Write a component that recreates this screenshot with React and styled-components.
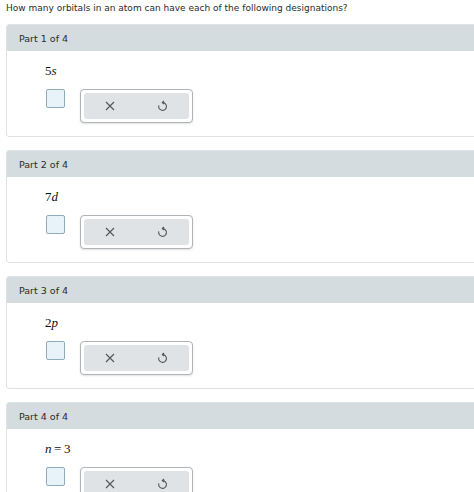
import React from "react";
import styled, { createGlobalStyle } from "styled-components";

const GlobalStyle = createGlobalStyle`
  html, body {
    margin: 0;
    padding: 0;
    overflow: hidden;
    background: #fff;
  }
  body {
    font-family: "DejaVu Sans", Verdana, sans-serif;
    color: #333;
  }
`;

const Page = styled.div`
  display: flex;
  flex-direction: column;
  padding: 2px 0 0 6px;
  width: 540px;
`;

const Question = styled.p`
  margin: 0 0 9px 0;
  font-size: 9px;
  line-height: 13px;
  color: #2b2b2b;
`;

const Cards = styled.div`
  display: flex;
  flex-direction: column;
  gap: 13px;
`;

const Card = styled.section`
  border: 1px solid #dfe2e4;
  border-radius: 3px;
  overflow: hidden;
`;

const Header = styled.div`
  height: 26px;
  display: flex;
  align-items: center;
  padding-left: 12px;
  background: #d4dcdf;
  font-size: 9.5px;
  color: #2b2b2b;
`;

const Body = styled.div`
  padding: 12px 0 13px 37px;
  display: flex;
  flex-direction: column;
  gap: 10px;
`;

const MathLabel = styled.div`
  font-family: "Liberation Serif", "Times New Roman", serif;
  font-size: 13px;
  line-height: 16px;
  color: #111;
  padding-left: 1px;
`;

const Var = styled.i`
  font-family: "Liberation Serif", "Times New Roman", serif;
  font-style: italic;
`;

const Row = styled.div`
  display: flex;
  align-items: flex-start;
  gap: 15px;
`;

const AnswerBox = styled.div`
  width: 17px;
  height: 17px;
  margin-left: 2px;
  border: 1px solid #8eacbb;
  border-radius: 2px;
  background: #e7f3f8;
`;

const ToolGroup = styled.div`
  width: 105px;
  height: 26px;
  padding: 3px;
  border: 1px solid #aeb4b8;
  border-radius: 4px;
  background: #fff;
  box-shadow: 0 1px 2px rgba(0, 0, 0, 0.12);
  display: flex;
`;

const ToolInner = styled.div`
  flex: 1;
  display: flex;
  background: #dfe3e5;
  border-radius: 3px;
`;

const ToolButton = styled.button`
  flex: 1;
  border: none;
  background: transparent;
  padding: 0;
  display: flex;
  align-items: center;
  justify-content: center;
  color: #555;
`;

const CloseIcon = () => (
  <svg width="10" height="10" viewBox="0 0 10 10">
    <path d="M1 1 L9 9 M9 1 L1 9" stroke="#555" strokeWidth="1.1" fill="none" />
  </svg>
);

const UndoIcon = () => (
  <svg width="11" height="12" viewBox="0 0 11 12">
    <path
      d="M5.5 2.6 A3.9 3.9 0 1 1 1.8 5.4"
      stroke="#555"
      strokeWidth="1.1"
      fill="none"
    />
    <path d="M7 1 L5.3 2.6 L7 4.2" stroke="#555" strokeWidth="1.1" fill="none" />
  </svg>
);

const parts = [
  { label: <>5<Var>s</Var></> },
  { label: <>7<Var>d</Var></> },
  { label: <>2<Var>p</Var></> },
  { label: <><Var>n</Var>&thinsp;=&thinsp;3</> },
];

const App = () => (
  <>
    <GlobalStyle />
    <Page>
      <Question>
        How many orbitals in an atom can have each of the following designations?
      </Question>
      <Cards>
        {parts.map((p, i) => (
          <Card key={i}>
            <Header>
              Part {i + 1} of {parts.length}
            </Header>
            <Body>
              <MathLabel>{p.label}</MathLabel>
              <Row>
                <AnswerBox />
                <ToolGroup>
                  <ToolInner>
                    <ToolButton>
                      <CloseIcon />
                    </ToolButton>
                    <ToolButton>
                      <UndoIcon />
                    </ToolButton>
                  </ToolInner>
                </ToolGroup>
              </Row>
            </Body>
          </Card>
        ))}
      </Cards>
    </Page>
  </>
);

export default App;
